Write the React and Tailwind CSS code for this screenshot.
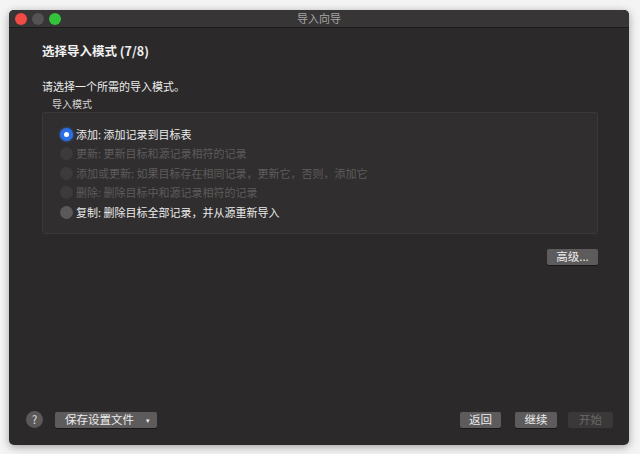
import React from "react";

const font = { fontFamily: '"Noto Sans CJK SC", "Liberation Sans", sans-serif' };

function Radio({ checked, label, disabled }) {
  return (
    <div className="flex items-center h-[19.5px]">
      {checked ? (
        <span className="w-[13px] h-[13px] rounded-full bg-[#2a6fe6] flex items-center justify-center shadow-[0_0_3px_rgba(60,130,255,0.8)]">
          <span className="w-[5px] h-[5px] rounded-full bg-white" />
        </span>
      ) : (
        <span
          className={
            "w-[13px] h-[13px] rounded-full " +
            (disabled ? "bg-[#3c3a3a]" : "bg-[#5a5858]")
          }
        />
      )}
      <span
        className={
          "ml-[3px] text-[11px] leading-none " +
          (disabled ? "text-[#5e5c5c]" : "text-[#ececec]")
        }
      >
        {label}
      </span>
    </div>
  );
}

function Button({ children, disabled, className = "" }) {
  return (
    <div
      className={
        "h-[16px] flex items-center justify-center rounded-[2px] text-[11.5px] leading-none " +
        (disabled
          ? "bg-[#3a3838] text-[#6a6868]"
          : "bg-[#5d5b5b] text-[#ececec] shadow-[0_1px_0_rgba(0,0,0,0.4)]") +
        " " +
        className
      }
    >
      {children}
    </div>
  );
}

export default function App() {
  return (
    <div className="w-[640px] h-[454px] bg-[#f4f4f4] pt-[10px] pl-[9px]" style={font}>
      <div className="w-[620px] h-[435px] rounded-[5px] bg-[#2b2929] overflow-hidden flex flex-col shadow-[0_2px_8px_rgba(0,0,0,0.35)]">
        {/* title bar */}
        <div className="relative h-[18px] bg-[#373535] border-b border-[#1c1b1b] flex items-center shrink-0">
          <div className="flex items-center gap-[5px] pl-[6px]">
            <span className="w-[12px] h-[12px] rounded-full bg-[#f24a45]" />
            <span className="w-[12px] h-[12px] rounded-full bg-[#555353]" />
            <span className="w-[12px] h-[12px] rounded-full bg-[#33c33a]" />
          </div>
          <div className="absolute inset-0 flex items-center justify-center text-[11px] text-[#a8a6a6] leading-none">
            导入向导
          </div>
        </div>

        {/* body */}
        <div className="flex-1 flex flex-col px-[33px] pt-[17px]">
          <div className="text-[12.5px] font-bold text-[#f0f0f0] leading-none">选择导入模式 (7/8)</div>
          <div className="mt-[23px] text-[11px] text-[#ececec] leading-none">请选择一个所需的导入模式。</div>
          <div className="mt-[7px] ml-[10px] text-[10px] text-[#d8d6d6] leading-none">导入模式</div>
          <div className="mt-[3px] w-[556px] h-[122px] bg-[#302e2e] border border-[#3a3838] rounded-[3px] pl-[17px] pt-[12px]">
            <Radio checked label="添加: 添加记录到目标表" />
            <Radio disabled label="更新: 更新目标和源记录相符的记录" />
            <Radio disabled label="添加或更新: 如果目标存在相同记录，更新它，否则，添加它" />
            <Radio disabled label="删除: 删除目标中和源记录相符的记录" />
            <Radio label="复制: 删除目标全部记录，并从源重新导入" />
          </div>
          <div className="flex justify-end w-[556px] mt-[15px]">
            <Button className="w-[51px]">高级...</Button>
          </div>
        </div>

        {/* footer */}
        <div className="h-[33px] flex items-start px-[16px] shrink-0">
          <div className="w-[17px] h-[17px] rounded-full bg-[#5a5858] text-[#e0e0e0] text-[11px] flex items-center justify-center leading-none -mt-[1px] ml-[1px]">
            ?
          </div>
          <Button className="ml-[12px] w-[102px] justify-start pl-[10px]">
            <span>保存设置文件</span>
            <span className="ml-auto mr-[7px] text-[7px]">▾</span>
          </Button>
          <div className="flex-1" />
          <Button className="w-[41px]">返回</Button>
          <Button className="w-[42px] ml-[14px]">继续</Button>
          <Button disabled className="w-[45px] ml-[11px]">开始</Button>
        </div>
      </div>
    </div>
  );
}
